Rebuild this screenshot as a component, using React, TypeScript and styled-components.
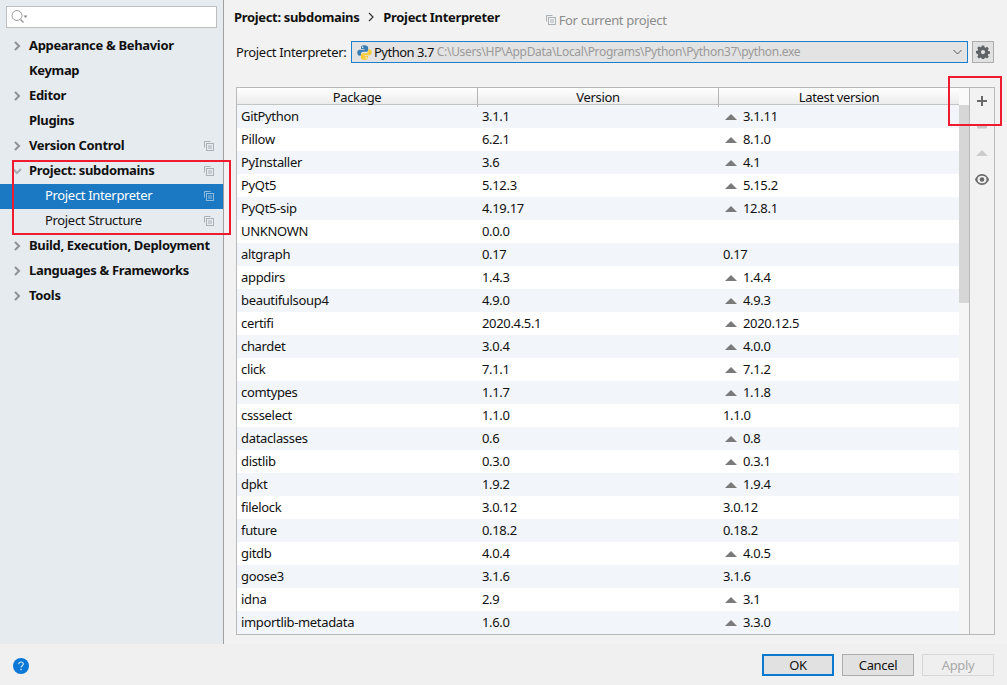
import React from "react";
import styled, { createGlobalStyle } from "styled-components";

const Global = createGlobalStyle`
  html, body { margin: 0; padding: 0; background: #f2f2f2; }
  body { font-family: "Noto Sans", "Liberation Sans", sans-serif; font-size: 13px; line-height: 18px; letter-spacing: -0.33px; color: #111; }
  * { box-sizing: border-box; }
`;

const Page = styled.div`
  width: 1007px;
  height: 685px;
  display: flex;
  flex-direction: column;
  position: relative;
  overflow: hidden;
`;
const Body = styled.div`
  display: flex;
  height: 644px;
`;
const Sidebar = styled.aside`
  width: 224px;
  flex: none;
  background: #e6ebf0;
  border-right: 1px solid #a0a0a0;
  padding-top: 6px;
`;
const Search = styled.div`
  width: 211px;
  height: 22px;
  margin: 0 0 6px 6px;
  background: #fff;
  border: 1px solid #bdbdbd;
  padding-left: 4px;
  display: flex;
  align-items: center;
`;
const TreeRow = styled.div<{ $selected?: boolean }>`
  height: 25px;
  display: flex;
  align-items: center;
  position: relative;
  background: ${(p) => (p.$selected ? "#1b78c2" : "transparent")};
  color: ${(p) => (p.$selected ? "#fff" : "#111")};
`;
const ArrowSlot = styled.span`
  width: 29px;
  flex: none;
  display: flex;
  justify-content: center;
  padding: 0 0 2px 4px;
`;
const Label = styled.span<{ $child?: boolean }>`
  flex: 1;
  white-space: nowrap;
  font-weight: ${(p) => (p.$child ? 400 : 700)};
  padding-left: ${(p) => (p.$child ? 16 : 0)}px;
  padding-bottom: 4px;
  font-size: 13px;
  line-height: 18px;
`;
const CopySlot = styled.span`
  width: 19px;
  flex: none;
  display: flex;
  align-items: center;
  padding-bottom: 2px;
`;
const Main = styled.main`
  flex: 1;
  padding: 0 12px 0 10px;
  background: #f2f2f2;
  display: flex;
  flex-direction: column;
`;
const Crumbs = styled.div`
  height: 34px;
  display: flex;
  align-items: center;
  font-weight: 700;
  white-space: nowrap;
`;
const CrumbSep = styled.span`
  display: flex;
  margin: 0 9px 0 9px;
`;
const Scope = styled.span`
  display: flex;
  align-items: center;
  gap: 3px;
  margin-left: 46px;
  margin-top: 5px;
  font-weight: 400;
  color: #8c8c8c;
`;
const InterpreterRow = styled.div`
  height: 22px;
  margin-top: 7px;
  margin-left: 2px;
  display: flex;
  align-items: center;
  white-space: nowrap;
`;
const InterpreterLabel = styled.span`
  width: 115px;
  flex: none;
`;
const Combo = styled.div`
  width: 617px;
  height: 22px;
  flex: none;
  background: #e3e3e3;
  border: 1px solid #1b7fcc;
  display: flex;
  align-items: center;
  padding-left: 5px;
`;
const ComboName = styled.span`
  margin-left: 2px;
  color: #111;
  letter-spacing: -0.5px;
`;
const ComboPath = styled.span`
  flex: 1;
  margin-left: 3px;
  color: #9a9a9a;
  font-size: 12px;
`;
const ComboChevron = styled.span`
  display: flex;
  margin-right: 5px;
`;
const GearButton = styled.div`
  width: 22px;
  height: 22px;
  margin-left: 4px;
  flex: none;
  background: #e1e1e1;
  border: 1px solid #adadad;
  display: flex;
  align-items: center;
  justify-content: center;
`;
const TableFrame = styled.div`
  margin-top: 24px;
  margin-left: 2px;
  width: 759px;
  height: 548px;
  flex: none;
  border: 1px solid #b9b9b9;
  display: flex;
  background: #fff;
`;
const TableArea = styled.div`
  width: 722px;
  flex: none;
`;
const Head = styled.div`
  display: grid;
  grid-template-columns: 241px 241px 240px;
  height: 17px;
  background: linear-gradient(#ffffff, #ececec);
  border-bottom: 1px solid #c4c4c4;
`;
const HeadCell = styled.div<{ $last?: boolean }>`
  text-align: center;
  line-height: 19px;
  font-size: 13px;
  border-right: ${(p) => (p.$last ? "none" : "1px solid #b5b5b5")};
`;
const Row = styled.div<{ $odd: boolean }>`
  display: grid;
  grid-template-columns: 241px 241px 240px;
  height: 23px;
  align-items: center;
  background: ${(p) => (p.$odd ? "#f2f5f9" : "#fff")};
`;
const Cell = styled.div`
  padding-left: 4px;
  white-space: nowrap;
  line-height: 23px;
`;
const Latest = styled.div<{ $up: boolean }>`
  padding-left: ${(p) => (p.$up ? 6 : 4)}px;
  display: flex;
  align-items: center;
  gap: 6px;
  white-space: nowrap;
  line-height: 23px;
`;
const ScrollTrack = styled.div`
  width: 10px;
  flex: none;
  background: #f5f5f5;
  display: flex;
  flex-direction: column;
`;
const ScrollCorner = styled.div`
  height: 17px;
  background: #fafafa;
`;
const ScrollThumb = styled.div`
  height: 198px;
  background: #d6d6d6;
`;
const SideTools = styled.div`
  flex: 1;
  background: #f2f2f2;
  border-left: 1px solid #b9b9b9;
  display: flex;
  flex-direction: column;
  align-items: center;
`;
const ToolIcon = styled.div`
  height: 26px;
  width: 100%;
  display: flex;
  align-items: center;
  justify-content: center;
`;
const Footer = styled.footer`
  height: 41px;
  background: #f0f0f0;
  display: flex;
  align-items: center;
  padding: 0 13px 0 13px;
  gap: 8px;
`;
const HelpSlot = styled.span`
  display: flex;
  margin-right: auto;
  margin-top: 2px;
`;
const Btn = styled.button<{ $primary?: boolean; $disabled?: boolean }>`
  width: 72px;
  height: 22px;
  padding: 0;
  margin: 0;
  font: inherit;
  letter-spacing: inherit;
  color: ${(p) => (p.$disabled ? "#a8a8a8" : "#111")};
  background: ${(p) => (p.$disabled ? "#efefef" : "#e1e1e1")};
  border: ${(p) =>
    p.$primary ? "2px solid #0b79d0" : p.$disabled ? "1px solid #d6d6d6" : "1px solid #adadad"};
  line-height: 18px;
`;
const RedMark = styled.div`
  position: absolute;
  border: 2px solid #ee1c2e;
  pointer-events: none;
`;
const RedTree = styled(RedMark)`
  left: 12px;
  top: 160px;
  width: 219px;
  height: 75px;
`;
const RedPlus = styled(RedMark)`
  left: 948px;
  top: 76px;
  width: 54px;
  height: 50px;
`;

const Chevron = ({ open }: { open?: boolean }) => (
  <svg width="10" height="12" viewBox="0 0 10 12">
    <path
      d={open ? "M1 4l4 4 4-4" : "M3 2l4 4-4 4"}
      fill="none"
      stroke={open ? "#a8adb2" : "#8e9296"}
      strokeWidth="2"
    />
  </svg>
);
const CopyIcon = ({ light }: { light?: boolean }) => (
  <svg width="10" height="10" viewBox="0 0 10 10" fill="none" stroke={light ? "#8fbbdf" : "#a9b0b6"} strokeWidth="1">
    <path d="M.5 6.500V.5h6" />
    <rect x="2.5" y="2.5" width="7" height="7" />
    <path d="M4 5h4M4 7h4" />
  </svg>
);
const SearchIcon = () => (
  <svg width="18" height="16" viewBox="0 0 18 16" fill="none">
    <circle cx="6" cy="6.500" r="5" stroke="#9a9a9a" />
    <path d="M9.500 10.500l3 3" stroke="#9a9a9a" strokeWidth="1.400" />
    <path d="M12.500 6.500h4l-2 2.500z" fill="#8a8a8a" />
  </svg>
);
const UpTriangle = ({ color = "#7a7a7a" }: { color?: string }) => (
  <svg width="12" height="6" viewBox="0 0 12 6">
    <path d="M6 0l6 6H0z" fill={color} />
  </svg>
);
const PythonLogo = () => (
  <svg width="15" height="15" viewBox="0 0 16 16">
    <path d="M8 .3C4.800.3 4.300 1.600 4.300 2.800v1.500H8v.7H2.900C1.400 5 .3 6 .3 8s1 3.400 2.500 3.400h1.300V9.700c0-1.300 1.100-2.400 2.400-2.400h3.400c1.100 0 2-.9 2-2V2.800C11.900 1.400 10.700.3 8 .3z" fill="#3a7db5" />
    <path d="M8 15.700c3.200 0 3.700-1.300 3.700-2.500v-1.500H8V11h5.100c1.500 0 2.600-1 2.600-3s-1-3.400-2.500-3.400h-1.300v1.700c0 1.300-1.100 2.400-2.400 2.400H6.100c-1.100 0-2 .9-2 2v2.500c0 1.400 1.200 2.500 3.900 2.500z" fill="#f7cb3d" />
    <circle cx="6" cy="2.500" r=".8" fill="#fff" />
    <circle cx="10" cy="13.500" r=".8" fill="#fff" />
  </svg>
);
const Gear = () => (
  <svg width="14" height="14" viewBox="0 0 14 14">
    <path
      fillRule="evenodd"
      fill="#5f6366"
      d="M5.800.5h2.400l.3 1.800 1.100.5 1.500-1 1.700 1.700-1 1.500.5 1.100 1.800.3v2.400l-1.800.3-.5 1.100 1 1.500-1.700 1.700-1.500-1-1.100.5-.3 1.800H5.800l-.3-1.800-1.100-.5-1.500 1-1.700-1.700 1-1.500-.5-1.100L-.1 8.300V5.900l1.800-.3.5-1.100-1-1.500 1.700-1.700 1.500 1 1.100-.5zM7 5a2.100 2.100 0 100 4.200A2.100 2.100 0 007 5z"
    />
  </svg>
);
const Help = () => (
  <svg width="16" height="16" viewBox="0 0 16 16">
    <circle cx="8" cy="8" r="8" fill="#0b78d7" />
    <path d="M5.700 6.200c0-1.400 1-2.200 2.300-2.200s2.300.8 2.300 2c0 1.700-2.200 1.700-2.200 3.500" fill="none" stroke="#cfe5f8" strokeWidth="1.200" />
    <rect x="7.400" y="10.800" width="1.300" height="1.400" fill="#cfe5f8" />
  </svg>
);

type Tree = { label: string; arrow?: "open" | "closed"; copy?: boolean; child?: boolean; selected?: boolean };
const tree: Tree[] = [
  { label: "Appearance & Behavior", arrow: "closed" },
  { label: "Keymap" },
  { label: "Editor", arrow: "closed" },
  { label: "Plugins" },
  { label: "Version Control", arrow: "closed", copy: true },
  { label: "Project: subdomains", arrow: "open", copy: true },
  { label: "Project Interpreter", child: true, copy: true, selected: true },
  { label: "Project Structure", child: true, copy: true },
  { label: "Build, Execution, Deployment", arrow: "closed" },
  { label: "Languages & Frameworks", arrow: "closed" },
  { label: "Tools", arrow: "closed" },
];

const packages: [string, string, string, boolean][] = [
  ["GitPython", "3.1.1", "3.1.11", true],
  ["Pillow", "6.2.1", "8.1.0", true],
  ["PyInstaller", "3.6", "4.1", true],
  ["PyQt5", "5.12.3", "5.15.2", true],
  ["PyQt5-sip", "4.19.17", "12.8.1", true],
  ["UNKNOWN", "0.0.0", "", false],
  ["altgraph", "0.17", "0.17", false],
  ["appdirs", "1.4.3", "1.4.4", true],
  ["beautifulsoup4", "4.9.0", "4.9.3", true],
  ["certifi", "2020.4.5.1", "2020.12.5", true],
  ["chardet", "3.0.4", "4.0.0", true],
  ["click", "7.1.1", "7.1.2", true],
  ["comtypes", "1.1.7", "1.1.8", true],
  ["cssselect", "1.1.0", "1.1.0", false],
  ["dataclasses", "0.6", "0.8", true],
  ["distlib", "0.3.0", "0.3.1", true],
  ["dpkt", "1.9.2", "1.9.4", true],
  ["filelock", "3.0.12", "3.0.12", false],
  ["future", "0.18.2", "0.18.2", false],
  ["gitdb", "4.0.4", "4.0.5", true],
  ["goose3", "3.1.6", "3.1.6", false],
  ["idna", "2.9", "3.1", true],
  ["importlib-metadata", "1.6.0", "3.3.0", true],
];

export default function App() {
  return (
    <Page>
      <Global />
      <Body>
        <Sidebar>
          <Search>
            <SearchIcon />
          </Search>
          {tree.map((t) => (
            <TreeRow key={t.label} $selected={t.selected}>
              <ArrowSlot>{t.arrow && <Chevron open={t.arrow === "open"} />}</ArrowSlot>
              <Label $child={t.child}>{t.label}</Label>
              <CopySlot>{t.copy && <CopyIcon light={t.selected} />}</CopySlot>
            </TreeRow>
          ))}
        </Sidebar>
        <Main>
          <Crumbs>
            Project: subdomains
            <CrumbSep>
              <svg width="6" height="10" viewBox="0 0 6 10">
                <path d="M1 1l4 4-4 4" fill="none" stroke="#333" strokeWidth="1.200" />
              </svg>
            </CrumbSep>
            Project Interpreter
            <Scope>
              <CopyIcon />
              For current project
            </Scope>
          </Crumbs>
          <InterpreterRow>
            <InterpreterLabel>Project Interpreter:</InterpreterLabel>
            <Combo>
              <PythonLogo />
              <ComboName>Python 3.7</ComboName>
              <ComboPath>C:\Users\HP\AppData\Local\Programs\Python\Python37\python.exe</ComboPath>
              <ComboChevron>
                <svg width="9" height="6" viewBox="0 0 9 6">
                  <path d="M.5 1l4 4 4-4" fill="none" stroke="#555" />
                </svg>
              </ComboChevron>
            </Combo>
            <GearButton>
              <Gear />
            </GearButton>
          </InterpreterRow>
          <TableFrame>
            <TableArea>
              <Head>
                <HeadCell>Package</HeadCell>
                <HeadCell>Version</HeadCell>
                <HeadCell $last>Latest version</HeadCell>
              </Head>
              {packages.map(([name, ver, latest, up], i) => (
                <Row key={name} $odd={i % 2 === 0}>
                  <Cell>{name}</Cell>
                  <Cell>{ver}</Cell>
                  <Latest $up={up}>
                    {up && <UpTriangle />}
                    {latest}
                  </Latest>
                </Row>
              ))}
            </TableArea>
            <ScrollTrack>
              <ScrollCorner />
              <ScrollThumb />
            </ScrollTrack>
            <SideTools>
              <ToolIcon>
                <svg width="10" height="10" viewBox="0 0 10 10">
                  <path d="M5 0v10M0 5h10" stroke="#6a6a6a" strokeWidth="2" />
                </svg>
              </ToolIcon>
              <ToolIcon>
                <svg width="10" height="6" viewBox="0 0 10 6">
                  <path d="M0 3h10" stroke="#c8c8c8" strokeWidth="3" />
                </svg>
              </ToolIcon>
              <ToolIcon>
                <UpTriangle color="#cdcdcd" />
              </ToolIcon>
              <ToolIcon>
                <svg width="14" height="11" viewBox="0 0 14 11">
                  <path d="M7 0C3.500 0 1 3 0 5.500c1 2.500 3.500 5.500 7 5.500s6-3 7-5.500C13 3 10.500 0 7 0z" fill="#6a6a6a" />
                  <ellipse cx="7" cy="5.500" rx="4.500" ry="3.700" fill="#f2f2f2" />
                  <circle cx="7" cy="5.500" r="2.300" fill="#6a6a6a" />
                </svg>
              </ToolIcon>
            </SideTools>
          </TableFrame>
        </Main>
      </Body>
      <Footer>
        <HelpSlot>
          <Help />
        </HelpSlot>
        <Btn $primary>OK</Btn>
        <Btn>Cancel</Btn>
        <Btn $disabled>Apply</Btn>
      </Footer>
      <RedTree />
      <RedPlus />
    </Page>
  );
}
